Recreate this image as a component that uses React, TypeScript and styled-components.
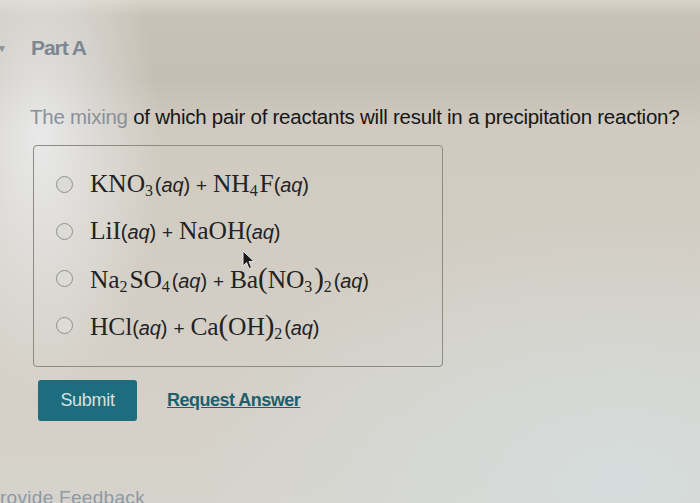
import React from 'react'
import styled, { createGlobalStyle } from 'styled-components'

const Global = createGlobalStyle`
  html, body { margin: 0; padding: 0; }
  body {
    width: 700px;
    height: 503px;
    overflow: hidden;
    font-family: "Liberation Sans", Arial, sans-serif;
    background:
      radial-gradient(ellipse 120px 260px at 40px 140px, rgba(236,238,240,0.85), rgba(236,238,240,0) 100%),
      radial-gradient(ellipse 420px 260px at 620px 480px, rgba(214,222,222,0.9), rgba(214,222,222,0) 100%),
      linear-gradient(180deg, #d9d3c9 0px, #c8c1b6 16px, #c5beb3 80px, #d0cac0 130px, #d3cec5 300px, #d6d3cc 503px);
  }
`

const Page = styled.div`
  position: relative;
  width: 700px;
  height: 503px;
  padding: 37px 0 0 0;
  box-sizing: border-box;
  overflow: hidden;
`

const PartHead = styled.div`
  display: flex;
  align-items: center;
  gap: 25px;
  font-size: 21px;
  font-weight: bold;
  color: #7d8792;
  letter-spacing: -1px;
  height: 22px;
`

const Caret = styled.span`
  font-size: 10px;
  color: #8a939c;
  margin-left: -3px;
`

const Question = styled.div`
  margin: 46px 0 0 30px;
  font-size: 20.5px;
  color: #161616;
  letter-spacing: -0.25px;
  line-height: 24px;
`

const Faded = styled.span`
  color: #8a9098;
`

const Choices = styled.div`
  margin: 16px 0 0 33px;
  width: 410px;
  height: 222px;
  box-sizing: border-box;
  border: 1px solid #8f8a82;
  border-radius: 4px;
  padding: 25px 0 0 22px;
  display: flex;
  flex-direction: column;
  gap: 21px;
`

const Row = styled.label`
  display: flex;
  align-items: center;
  gap: 17px;
  height: 26px;
`

const Radio = styled.span`
  width: 15px;
  height: 15px;
  border-radius: 50%;
  border: 1.5px solid #8d8f90;
  background: #dddbd6;
  flex: none;
`

const Chem = styled.span`
  font-family: "Liberation Serif", "Times New Roman", serif;
  font-size: 25.5px;
  color: #232323;
  letter-spacing: -0.1px;
  white-space: nowrap;
`

const Sub = styled.sub`
  font-size: 16px;
  vertical-align: -4px;
  line-height: 0;
  margin-right: 2px;
`

const Paren = styled.span<{ $big?: boolean }>`
  font-size: ${p => (p.$big ? '29px' : '25px')};
`

const Phase = styled.span`
  font-family: "Liberation Sans", Arial, sans-serif;
  font-size: 20px;
  i { font-style: italic; }
`

const Plus = styled.span`
  font-family: "Liberation Sans", Arial, sans-serif;
  font-size: 19px;
  margin: 0 6px;
`

const Actions = styled.div`
  margin: 13px 0 0 38px;
  display: flex;
  align-items: center;
  gap: 30px;
`

const SubmitButton = styled.button`
  width: 99px;
  height: 41px;
  border: none;
  border-radius: 3px;
  background: #1d6d7e;
  color: #d9e0de;
  font-family: "Liberation Sans", Arial, sans-serif;
  font-size: 18px;
  letter-spacing: -0.3px;
`

const RequestLink = styled.a`
  font-size: 18px;
  font-weight: bold;
  color: #1e5f6c;
  text-decoration: underline;
  letter-spacing: -0.5px;
`

const Feedback = styled.div`
  margin: 66px 0 0 -13px;
  font-size: 19px;
  color: #8d99a4;
  letter-spacing: 0.3px;
`

const Cursor = styled.svg`
  position: absolute;
  left: 242px;
  top: 250px;
`

const phase = (
  <Phase>
    (<i>aq</i>)
  </Phase>
)

export default function App() {
  return (
    <>
      <Global />
      <Page>
        <PartHead>
          <Caret>▼</Caret>
          <span>Part A</span>
        </PartHead>
        <Question>
          <Faded>The mixing</Faded> of which pair of reactants will result in a precipitation reaction?
        </Question>
        <Choices>
          <Row>
            <Radio />
            <Chem>
              KNO<Sub>3</Sub>{phase}<Plus>+</Plus>NH<Sub>4</Sub>F{phase}
            </Chem>
          </Row>
          <Row>
            <Radio />
            <Chem>
              LiI{phase}<Plus>+</Plus>NaOH{phase}
            </Chem>
          </Row>
          <Row>
            <Radio />
            <Chem>
              Na<Sub>2</Sub>SO<Sub>4</Sub>{phase}<Plus>+</Plus>Ba<Paren $big>(</Paren>NO<Sub>3</Sub><Paren $big>)</Paren><Sub>2</Sub>{phase}
            </Chem>
          </Row>
          <Row>
            <Radio />
            <Chem>
              HCl{phase}<Plus>+</Plus>Ca<Paren $big>(</Paren>OH<Paren $big>)</Paren><Sub>2</Sub>{phase}
            </Chem>
          </Row>
        </Choices>
        <Actions>
          <SubmitButton>Submit</SubmitButton>
          <RequestLink>Request Answer</RequestLink>
        </Actions>
        <Feedback>Provide Feedback</Feedback>
        <Cursor width="14" height="20" viewBox="0 0 14 20">
          <path d="M1 1 L1 16 L4.5 12.5 L7 18.5 L9.5 17.5 L7 11.5 L12 11.5 Z" fill="#1a1a1a" stroke="#e6e6e6" strokeWidth="1" />
        </Cursor>
      </Page>
    </>
  )
}
